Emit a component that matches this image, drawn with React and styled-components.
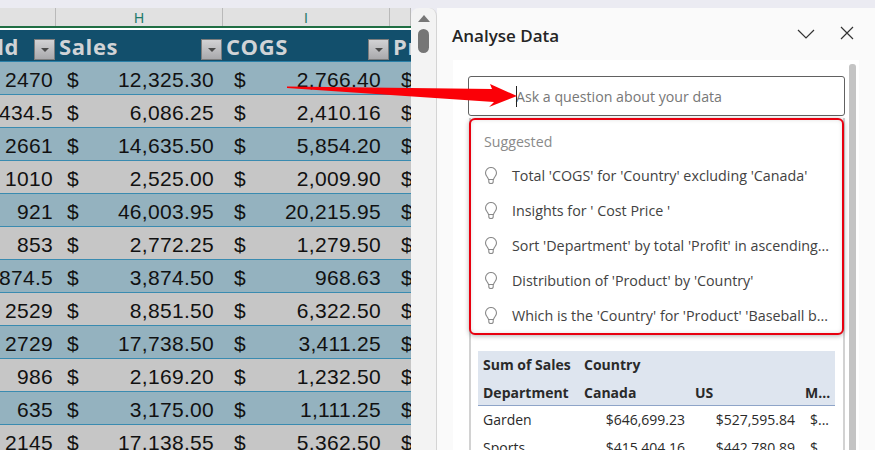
import React from 'react';
import styled, { createGlobalStyle } from 'styled-components';

const Global = createGlobalStyle`
  html, body { margin: 0; padding: 0; background: #ebebf2; }
  * { box-sizing: border-box; }
`;
const Page = styled.div`
  position: relative; width: 875px; height: 450px; overflow: hidden;
  padding-top: 8px; display: flex; background: #ebebf2;
`;
const Sheet = styled.div`
  width: 411px; height: 442px; overflow: hidden; flex: none; background: #c6c6c6;
`;
const ColHeads = styled.div`
  display: grid; grid-template-columns: 56px 167px 167px 21px; height: 22px;
  background: #e1e1e1; border-bottom: 2px solid #fff; position: relative;
  &::after { content: ''; position: absolute; left: 0; right: 0; bottom: 0; height: 2px; background: #1f6e43; }
`;
const ColHead = styled.div`
  border-right: 1px solid #b9b9b9; color: #1f7a6a;
  font: 14px/20px "Liberation Sans", sans-serif; text-align: center;
`;
const TableGrid = styled.div`
  display: grid; grid-template-columns: 56px 167px 167px 21px;
`;
const HeadCell = styled.div`
  height: 32px; background: #124f6c; color: #d0d3d6; position: relative; overflow: hidden;
  font: bold 22px/33px "Open Sans", sans-serif; letter-spacing: 0.6px; padding-left: 3px; white-space: nowrap;
  border-bottom: 1px solid #2a80a8;
`;
const HeadCellEnd = styled(HeadCell)`
  display: flex; justify-content: flex-end; padding: 0 37px 0 0;
`;
const Filter = styled.span`
  position: absolute; right: 1px; top: 9px; width: 21px; height: 21px;
  background: linear-gradient(#d2d2d4, #a9a9ac); border: 1px solid #7d7d7d;
  display: flex; align-items: center; justify-content: center;
  &::after { content: ''; border: 4px solid transparent; border-top: 4px solid #4a4a4a; border-bottom: 0; }
`;
const Cell = styled.div`
  height: 33px; background: ${p => (p.$odd ? '#94b2bf' : '#c6c6c6')};
  border-bottom: 1px solid #3a8bb0; color: #111;
  font: 21px/36px "Liberation Sans", sans-serif; letter-spacing: 0.3px;
  display: flex; padding: ${p => (p.$num ? '0 3px 0 0' : '0 9px 0 11px')}; overflow: hidden; white-space: nowrap;
  justify-content: ${p => (p.$num ? 'flex-end' : 'space-between')};
`;
const Gutter = styled.div`
  width: 26px; flex: none; background: #f3f3f3; display: flex; flex-direction: column; align-items: center;
  padding-top: 7px; border-right: 1px solid #d4d4d4; border-radius: 8px 8px 0 0; gap: 7px;
`;
const UpArrow = styled.div`
  border: 6px solid transparent; border-bottom: 7px solid #777; border-top: 0; width: 0; height: 0;
`;
const Thumb = styled.div`
  width: 11px; height: 24px; border-radius: 6px; background: #767676;
`;
const Panel = styled.div`
  flex: 1; background: #fafafa; display: flex; flex-direction: column; padding: 0 16px;
`;
const PanelHead = styled.div`
  height: 52px; display: flex; align-items: center; font-family: "Open Sans", sans-serif;
`;
const Title = styled.div`
  font-size: 17px; font-weight: 600; color: #252525; flex: 1; margin-top: 3px; margin-left: -1px;
`;
const IconBtn = styled.svg`
  width: 20px; height: 20px; margin-left: ${p => p.$ml || 0}px; margin-right: ${p => p.$mr || 0}px; fill: none; stroke: #333; stroke-width: 1.2;
`;
const Body = styled.div`
  flex: 1; background: #fff; position: relative; padding: 16px 15px 0; width: 406px; overflow: hidden;
  display: flex; flex-direction: column;
`;
const Scroll = styled.div`
  position: absolute; right: 3px; top: 4px; bottom: 0; width: 7px; background: #c4c4c4; border-radius: 3px 3px 0 0;
`;
const Input = styled.div`
  width: 377px; height: 40px; flex: none; border: 1px solid #616161; border-radius: 3px; position: relative;
  font: 14.2px/40px "Open Sans", sans-serif; color: #777; padding-left: 47px;
`;
const Caret = styled.span`
  position: absolute; left: 47px; top: 9px; width: 1px; height: 21px; background: #222;
`;
const Card = styled.div`
  flex: 1; width: 376px; margin: 2px 0 0 1px; border-left: 2px solid #d2d2d2; border-right: 2px solid #d2d2d2;
`;
const Suggest = styled.div`
  height: 217px; margin: 0 -1px 0 -2px; border: 2px solid #e8000f; border-radius: 6px;
  box-shadow: 0 1px 5px rgba(0,0,0,.3), inset 0 0 4px rgba(0,0,0,.12); padding: 13px 13px; font-family: "Open Sans", sans-serif; background: #fff; position: relative;
`;
const SuggestLabel = styled.div`
  font-size: 14.2px; line-height: 18px; color: #8a8a8a; margin-bottom: 7px;
`;
const SuggestRow = styled.div`
  height: 35px; display: flex; align-items: center; gap: 14px; font-size: 14.3px; color: #424242; white-space: nowrap;
`;
const Bulb = styled.svg`
  width: 14px; height: 18px; flex: none; fill: none; stroke: #8a8a8a; stroke-width: 1.1;
`;
const Pivot = styled.div`
  margin: 16px 0 0 7px; width: 357px; font-family: "Open Sans", sans-serif; font-size: 14px; color: #2a2a2a;
  display: grid; grid-template-columns: 106px 111px 110px 30px; grid-auto-rows: 27.5px;
`;
const PivotHead = styled.div`
  background: #dee5ef; font-weight: 700; padding-left: ${p => p.$pl ?? 5}px; line-height: 28px; white-space: nowrap;
  border-bottom: ${p => (p.$last ? '1px solid #8ea4c8' : 0)};
`;
const PivotCell = styled.div`
  line-height: 27px; white-space: nowrap; text-align: ${p => (p.$r ? 'right' : 'left')};
  padding: ${p => (p.$r ? '0 10px 0 0' : '0 0 0 5px')};
`;
const ArrowOverlay = styled.svg`
  position: absolute; left: 285px; top: 80px; width: 240px; height: 30px; pointer-events: none;
`;

const rows = [
  ['2470', '12,325.30', '2,766.40'], ['434.5', '6,086.25', '2,410.16'], ['2661', '14,635.50', '5,854.20'],
  ['1010', '2,525.00', '2,009.90'], ['921', '46,003.95', '20,215.95'], ['853', '2,772.25', '1,279.50'],
  ['874.5', '3,874.50', '968.63'], ['2529', '8,851.50', '6,322.50'], ['2729', '17,738.50', '3,411.25'],
  ['986', '2,169.20', '1,232.50'], ['635', '3,175.00', '1,111.25'], ['2145', '17,138.55', '5,362.50'],
];
const suggestions = [
  "Total 'COGS' for 'Country' excluding 'Canada'",
  "Insights for ' Cost Price '",
  "Sort 'Department' by total 'Profit' in ascending...",
  "Distribution of 'Product' by 'Country'",
  "Which is the 'Country' for 'Product' 'Baseball b...",
];

const Amount = ({ v, odd }) => (
  <Cell $odd={odd}><span>$</span><span>{v}</span></Cell>
);

export default function App() {
  return (
    <Page>
      <Global />
      <Sheet>
        <ColHeads>
          <ColHead />
          <ColHead>H</ColHead>
          <ColHead>I</ColHead>
          <ColHead />
        </ColHeads>
        <TableGrid>
          <HeadCellEnd>ld<Filter /></HeadCellEnd>
          <HeadCell>Sales<Filter /></HeadCell>
          <HeadCell>COGS<Filter /></HeadCell>
          <HeadCell>Pr</HeadCell>
          {rows.map((r, i) => (
            <React.Fragment key={i}>
              <Cell $odd={i % 2 === 0} $num>{r[0]}</Cell>
              <Amount v={r[1]} odd={i % 2 === 0} />
              <Amount v={r[2]} odd={i % 2 === 0} />
              <Cell $odd={i % 2 === 0}>$</Cell>
            </React.Fragment>
          ))}
        </TableGrid>
      </Sheet>
      <Gutter>
        <UpArrow />
        <Thumb />
      </Gutter>
      <Panel>
        <PanelHead>
          <Title>Analyse Data</Title>
          <IconBtn viewBox="0 0 20 20"><path d="M2 6l8 8 8-8" /></IconBtn>
          <IconBtn viewBox="0 0 20 20" $ml={21} $mr={2}><path d="M4 3l12 12M16 3L4 15" /></IconBtn>
        </PanelHead>
        <Body>
          <Scroll />
          <Input><Caret />Ask a question about your data</Input>
          <Card>
            <Suggest>
              <SuggestLabel>Suggested</SuggestLabel>
              {suggestions.map(s => (
                <SuggestRow key={s}>
                  <Bulb viewBox="0 0 14 18">
                    <path d="M4.5 12.5C4 10 1.5 9 1.5 6a5.5 5.5 0 0 1 11 0c0 3-2.5 4-3 6.5z" />
                    <path d="M4.8 12.5v2.2c0 1.2 1 1.8 2.2 1.8s2.2-.6 2.2-1.8v-2.2" />
                  </Bulb>
                  {s}
                </SuggestRow>
              ))}
            </Suggest>
            <Pivot>
              <PivotHead>Sum of Sales</PivotHead><PivotHead $pl={0}>Country</PivotHead><PivotHead /><PivotHead />
              <PivotHead $last>Department</PivotHead><PivotHead $last $pl={0}>Canada</PivotHead><PivotHead $last $pl={0}>US</PivotHead><PivotHead $last $pl={0}>M...</PivotHead>
              <PivotCell>Garden</PivotCell><PivotCell $r>$646,699.23</PivotCell><PivotCell $r>$527,595.84</PivotCell><PivotCell>$...</PivotCell>
              <PivotCell>Sports</PivotCell><PivotCell $r>$415,404.16</PivotCell><PivotCell $r>$442,780.89</PivotCell><PivotCell>$...</PivotCell>
            </Pivot>
          </Card>
        </Body>
      </Panel>
      <ArrowOverlay viewBox="0 0 240 30">
        <polygon points="2,6.5 207,9 205,4 232,16 204,27 209,22 2,8" fill="#fb0007" />
      </ArrowOverlay>
    </Page>
  );
}
